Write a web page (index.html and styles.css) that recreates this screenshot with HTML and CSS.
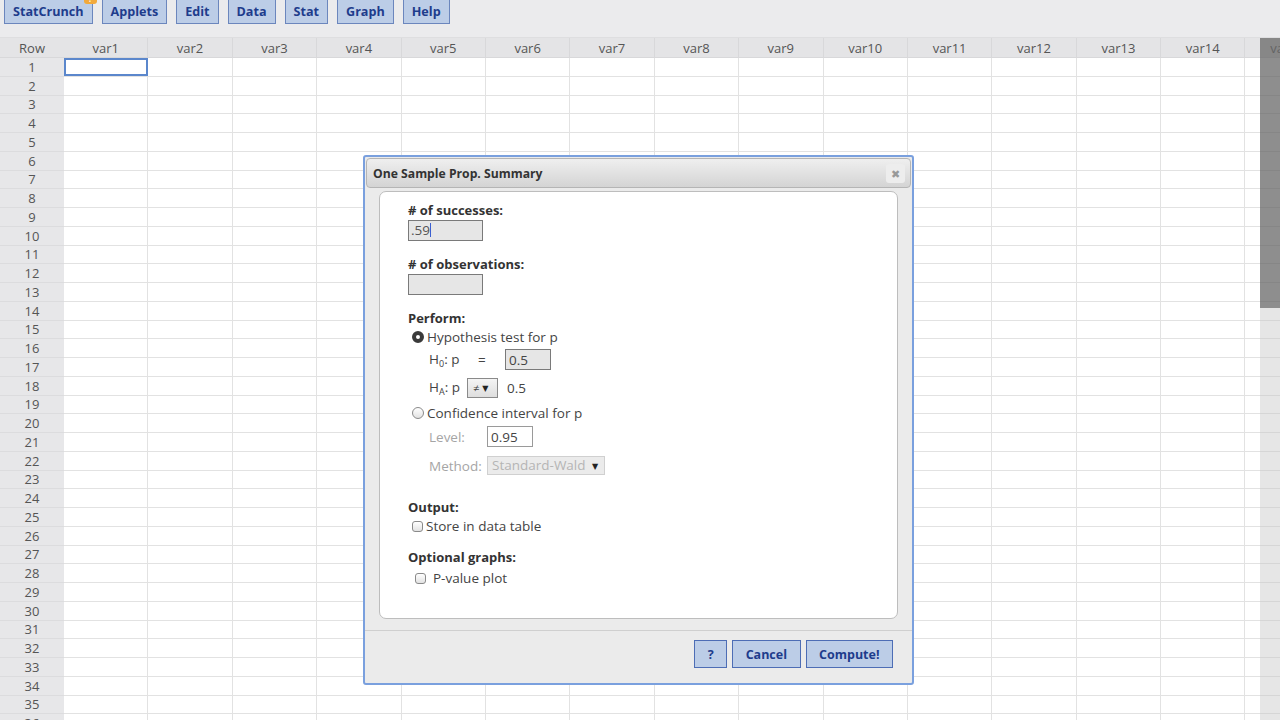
FILE: index.html
```html
<!DOCTYPE html>
<html lang="en">
<head>
    <meta charset="UTF-8">
    <title>StatCrunch</title>
    <link rel="stylesheet" href="styles.css">
</head>
<body>
    <div class="menu-bar">
        <button class="menu-btn has-badge">StatCrunch<span class="badge">!</span></button>
        <button class="menu-btn">Applets</button>
        <button class="menu-btn">Edit</button>
        <button class="menu-btn">Data</button>
        <button class="menu-btn">Stat</button>
        <button class="menu-btn">Graph</button>
        <button class="menu-btn">Help</button>
    </div>

    <div class="sheet">
        <table class="grid" id="grid">
            <thead><tr id="gridHead"><th class="row-head">Row</th></tr></thead>
            <tbody id="gridBody"></tbody>
        </table>
        <div class="scroll-track"></div>
        <div class="scroll-thumb"></div>
    </div>

    <div class="dialog">
        <div class="dialog-title">
            <span>One Sample Prop. Summary</span>
            <span class="close-btn">&#10006;</span>
        </div>
        <div class="dialog-panel">
            <div class="field-label">
                # of successes:
            </div>
            <div class="text-field">.59<span class="caret"></span></div>

            <div class="field-label gap">
                # of observations:
            </div>
            <div class="text-field"></div>

            <div class="field-label gap">
                Perform:
            </div>
            <label class="option"><input type="radio" name="perform" checked> Hypothesis test for p</label>
            <div class="sub-row h0-row">
                <span class="hyp">H<sub>0</sub>: p</span>
                <span class="eq">=</span>
                <input type="text" class="small-input grey" value="0.5">
            </div>
            <div class="sub-row ha-row">
                <span class="hyp-a">H<sub>A</sub>: p</span>
                <span class="mini-select">&ne; <span class="arrow">&#9660;</span></span>
                <span class="ha-value">0.5</span>
            </div>
            <label class="option ci-row"><input type="radio" name="perform"> Confidence interval for p</label>
            <div class="sub-row level-row">
                <span class="dim-label">Level:</span>
                <input type="text" class="small-input" value="0.95">
            </div>
            <div class="sub-row method-row">
                <span class="dim-label">Method:</span>
                <span class="method-select">Standard-Wald <span class="arrow">&#9660;</span></span>
            </div>

            <div class="field-label output-label">
                Output:
            </div>
            <label class="option"><input type="checkbox"> Store in data table</label>

            <div class="field-label graphs-label">
                Optional graphs:
            </div>
            <label class="option pvalue"><input type="checkbox"> P-value plot</label>
        </div>
        <div class="dialog-footer">
            <button class="dlg-btn">?</button>
            <button class="dlg-btn">Cancel</button>
            <button class="dlg-btn">Compute!</button>
        </div>
    </div>

    <script>
        // build the spreadsheet header and rows
        const head = document.getElementById('gridHead');
        const body = document.getElementById('gridBody');
        const cols = 15;

        for (let c = 1; c <= cols; c++) {
            const th = document.createElement('th');
            th.textContent = 'var' + c;
            head.appendChild(th);
        }

        for (let r = 1; r <= 36; r++) {
            const tr = document.createElement('tr');
            const num = document.createElement('td');
            num.className = 'row-num';
            num.textContent = r;
            tr.appendChild(num);
            for (let c = 1; c <= cols; c++) {
                const td = document.createElement('td');
                if (r === 1 && c === 1) td.className = 'selected';
                tr.appendChild(td);
            }
            body.appendChild(tr);
        }
    </script>
</body>
</html>
```

FILE: styles.css
```css
body {
    margin: 0;
    font-family: "Open Sans", "DejaVu Sans", sans-serif;
    background-color: #ebebed;
    overflow: hidden;
    width: 1280px;
    height: 720px;
}
.menu-bar {
    height: 37px;
    display: flex;
    align-items: flex-start;
    gap: 9px;
    padding-left: 4px;
    border-bottom: 1px solid #dedee0;
    background-color: #ebebed;
}
.menu-btn {
    position: relative;
    margin-top: -3px;
    height: 27px;
    padding: 2px 8px 0;
    font-family: "Open Sans", sans-serif;
    font-size: 12.6px;
    font-weight: bold;
    color: #1e3c8c;
    background-color: #bccde7;
    border: 1px solid #6b86bd;
    border-radius: 0;
}
.badge {
    position: absolute;
    right: -5px;
    top: -3px;
    width: 13px;
    height: 9px;
    background-color: #f2a93b;
    border-radius: 0 0 3px 3px;
    color: #fff;
    font-size: 7px;
    line-height: 9px;
}

.sheet {
    position: relative;
}
.grid {
    border-collapse: collapse;
    table-layout: fixed;
    width: 1330px;
    font-size: 13px;
    color: #555;
}
.grid th {
    height: 19px;
    padding: 0;
    font-weight: normal;
    width: 83.4px;
    background-color: #e4e4e6;
    border-right: 1px solid #d8d8da;
    border-bottom: 1px solid #d8d8da;
    text-align: center;
}
.grid th.row-head {
    width: 64px;
    border-right: none;
}
.grid td {
    height: 18.75px;
    padding: 0;
    line-height: 16px;
    background-color: #fff;
    border-right: 1px solid #e2e2e2;
    border-bottom: 1px solid #e2e2e2;
    box-sizing: border-box;
}
.grid td.row-num {
    background-color: #e7e7e9;
    border-right: none;
    text-align: center;
    border-bottom: 1px solid #dcdcde;
}
.grid td.selected {
    outline: 2px solid #5b87cc;
    outline-offset: -2px;
}
.scroll-track {
    position: absolute;
    left: 1260px;
    top: 0;
    width: 20px;
    height: 700px;
    background-color: rgba(200, 200, 200, 0.45);
}
.scroll-thumb {
    position: absolute;
    left: 1260px;
    top: 0;
    width: 20px;
    height: 270px;
    background-color: rgba(70, 70, 70, 0.55);
}

.dialog {
    position: absolute;
    left: 363px;
    top: 155px;
    width: 551px;
    height: 530px;
    box-sizing: border-box;
    border: 2px solid #7aa0de;
    border-radius: 3px;
    background-color: #ebebeb;
    display: flex;
    flex-direction: column;
    color: #444;
}
.dialog-title {
    margin: 1px 1px 0;
    height: 30px;
    box-sizing: border-box;
    display: flex;
    align-items: center;
    justify-content: space-between;
    padding: 0 5px 0 6px;
    font-size: 12.2px;
    font-weight: bold;
    color: #333;
    background: linear-gradient(#efefef, #d4d4d4);
    border: 1px solid #b5b5b5;
    border-radius: 4px;
}
.close-btn {
    width: 19px;
    height: 19px;
    line-height: 19px;
    text-align: center;
    font-size: 11px;
    font-weight: bold;
    color: #999;
    background-color: #ededed;
    border-radius: 3px;
}
.dialog-panel {
    margin: 3px 14px 0;
    height: 428px;
    box-sizing: border-box;
    padding: 9px 28px 0;
    background-color: #fff;
    border: 1px solid #bdbdbd;
    border-radius: 7px;
    font-size: 13.5px;
}
.field-label {
    font-size: 13px;
    font-weight: bold;
    color: #333;
    line-height: 18px;
}
.field-label.gap {
    margin-top: 14px;
}
.text-field {
    margin-top: 1px;
    width: 75px;
    height: 21px;
    box-sizing: border-box;
    border: 1px solid #7a7a7a;
    background-color: #e6e6e6;
    padding: 0 2px;
    line-height: 19px;
    color: #555;
}
.caret {
    display: inline-block;
    width: 1px;
    height: 14px;
    vertical-align: -2px;
    background-color: #3b5fd0;
}
.option {
    display: flex;
    align-items: center;
    height: 20px;
    line-height: 20px;
    color: #444;
}
.option input {
    appearance: none;
    margin: 0 3px 0 4px;
    width: 12px;
    height: 12px;
    box-sizing: border-box;
    border: 1px solid #8a8a8a;
    background: linear-gradient(#fff, #e2e2e2);
}
.option input[type="radio"] {
    border-radius: 50%;
}
.option input[type="radio"]:checked {
    border: 4px solid #3a3a3a;
    background: #fff;
}
.option input[type="checkbox"] {
    border-radius: 3px;
    width: 11px;
    height: 11px;
}
.sub-row {
    display: flex;
    align-items: center;
    height: 21px;
    padding-left: 21px;
    color: #444;
}
.sub-row sub {
    font-size: 9px;
    vertical-align: -3px;
}
.h0-row {
    margin-top: 2px;
}
.hyp {
    width: 49px;
}
.eq {
    width: 27px;
}
.small-input {
    width: 46px;
    height: 21px;
    box-sizing: border-box;
    border: 1px solid #9a9a9a;
    padding: 0 3px;
    font-family: "Open Sans", sans-serif;
    font-size: 13.5px;
    color: #444;
    background-color: #fff;
}
.small-input.grey {
    background-color: #e6e6e6;
    border-color: #7a7a7a;
}
.ha-row {
    margin-top: 7px;
}
.hyp-a {
    width: 38px;
}
.mini-select {
    width: 31px;
    height: 20px;
    box-sizing: border-box;
    border: 1px solid #8a8a8a;
    background: linear-gradient(#f4f4f4, #dedede);
    font-size: 11px;
    line-height: 18px;
    padding-left: 5px;
}
.arrow {
    font-size: 8px;
    color: #222;
    vertical-align: 1px;
}
.ha-value {
    margin-left: 9px;
}
.ci-row {
    margin-top: 5px;
}
.level-row {
    margin-top: 3px;
}
.dim-label {
    width: 58px;
    color: #a5a5a5;
}
.method-row {
    margin-top: 8px;
}
.method-select {
    width: 118px;
    height: 19px;
    box-sizing: border-box;
    border: 1px solid #d0d0d0;
    background-color: #ebebeb;
    color: #b5b5b5;
    line-height: 17px;
    padding-left: 4px;
}
.method-select .arrow {
    margin-left: 3px;
}
.output-label {
    margin-top: 22px;
}
.graphs-label {
    margin-top: 12px;
}
.pvalue {
    margin-top: 2px;
}
.pvalue input {
    margin-left: 7px;
    margin-right: 7px;
}
.dialog-footer {
    margin-top: 11px;
    border-top: 1px solid #cfcfcf;
    display: flex;
    justify-content: flex-end;
    gap: 5px;
    padding: 9px 19px 0 0;
}
.dlg-btn {
    height: 28px;
    padding: 0 12.5px;
    font-family: "Open Sans", sans-serif;
    font-size: 12.5px;
    font-weight: bold;
    color: #1e3c8c;
    background-color: #bccde7;
    border: 1px solid #4d6db5;
    border-radius: 0;
}
```
